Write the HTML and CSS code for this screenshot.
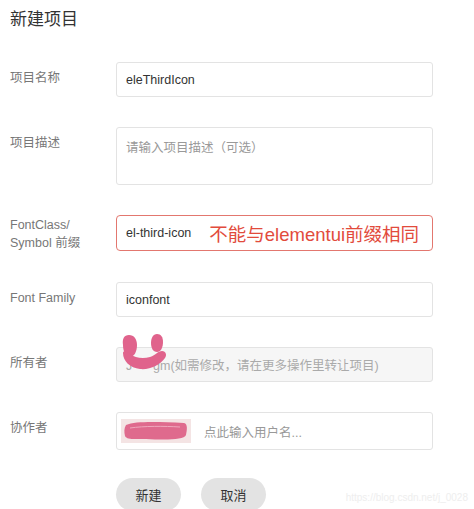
FILE: index.html
```html
<!DOCTYPE html>
<html lang="zh-CN">
<head>
    <meta charset="UTF-8">
    <title>新建项目</title>
    <link rel="stylesheet" href="styles.css">
</head>
<body>
    <h1 class="title">新建项目</h1>

    <form class="project-form">
        <div class="row">
            <label class="label">项目名称</label>
            <div class="field"><input class="input" type="text" value="eleThirdIcon"></div>
        </div>

        <div class="row">
            <label class="label">项目描述</label>
            <div class="field"><textarea class="input textarea" placeholder="请输入项目描述（可选）"></textarea></div>
        </div>

        <div class="row">
            <label class="label label-two">FontClass/<br>Symbol 前缀</label>
            <div class="field">
                <div class="input input-error">
                    <span class="value">el-third-icon</span>
                    <span class="error-note">不能与elementui前缀相同</span>
                </div>
            </div>
        </div>

        <div class="row">
            <label class="label">Font Family</label>
            <div class="field"><input class="input" type="text" value="iconfont"></div>
        </div>

        <div class="row">
            <label class="label">所有者</label>
            <div class="field">
                <div class="input input-disabled">J&nbsp;&nbsp;&nbsp;&nbsp;&nbsp;&nbsp;gm(如需修改，请在更多操作里转让项目)</div>
                <!-- redaction scribble -->
                <svg class="scribble" width="46" height="36" viewBox="0 0 46 36">
                    <path d="M7 1 C2 1 0 5 1 11 C1 18 4 23 8 23 C12 23 15 18 15 11 C15 5 12 1 7 1 Z" fill="#e0638c"/>
                    <path d="M35 0 C31 0 29 4 29 9 C29 14 31 18 35 18 C39 18 41 13 41 8 C41 3 39 0 35 0 Z" fill="#e0638c"/>
                    <path d="M1 19 C1 27 8 34 18 35 C28 36 38 31 43 24 C45 21 44 17 40 17 C36 17 34 21 28 23 C21 25 13 24 8 20 C5 17 1 16 1 19 Z" fill="#e0638c"/>
                </svg>
            </div>
        </div>

        <div class="row">
            <label class="label">协作者</label>
            <div class="field">
                <div class="input input-tags">
                    <span class="tag">
                        <svg width="64" height="20" viewBox="0 0 64 20">
                            <path d="M2 4 C12 0 34 1 60 2 C64 3 63 9 62 14 C60 19 42 19 22 18 C10 18 3 19 1 15 C0 11 0 7 2 4 Z" fill="#df6a8d"/>
                            <path d="M6 7 C20 5 40 5 56 6" stroke="#f0a8bd" stroke-width="1" fill="none"/>
                        </svg>
                    </span>
                    <span class="placeholder">点此输入用户名...</span>
                </div>
            </div>
        </div>

        <div class="actions">
            <button type="button" class="btn">新建</button>
            <button type="button" class="btn">取消</button>
        </div>
    </form>

    <div class="watermark">https://blog.csdn.net/j_0028</div>
</body>
</html>
```

FILE: styles.css
```css
body {
    margin: 0;
    padding: 0 10px;
    font-family: "Liberation Sans", "Noto Sans CJK SC", sans-serif;
    color: #333;
    background: #fff;
    height: 509px;
    overflow: hidden;
    position: relative;
}
.title {
    margin: 0;
    padding-top: 9px;
    font-size: 17px;
    font-weight: normal;
    line-height: 22px;
    color: #333;
}
.project-form {
    margin-top: 31px;
}
.row {
    display: flex;
    margin-bottom: 30px;
}
.label {
    width: 106px;
    flex-shrink: 0;
    font-size: 12.5px;
    color: #777;
    line-height: 33px;
}
.label-two {
    line-height: 18px;
    padding-top: 1px;
}
.field {
    width: 317px;
    position: relative;
}
.input {
    display: block;
    box-sizing: border-box;
    width: 100%;
    height: 35px;
    padding: 0 9px;
    border: 1px solid #e3e3e3;
    border-radius: 3px;
    background: #fff;
    font-family: inherit;
    font-size: 12.5px;
    color: #333;
    outline: none;
}
.textarea {
    height: 58px;
    padding-top: 9px;
    resize: none;
}
.textarea::placeholder {
    color: #999;
}
.input-error {
    display: flex;
    align-items: center;
    height: 36px;
    border-color: #e3776f;
    border-radius: 4px;
}
.error-note {
    margin-left: 18px;
    font-size: 18.5px;
    color: #e24b3c;
}
.input-disabled {
    display: flex;
    align-items: center;
    background: #f6f6f6;
    color: #aaa;
}
.scribble {
    position: absolute;
    left: 6px;
    top: -13px;
}
.input-tags {
    display: flex;
    align-items: center;
    height: 38px;
    padding-left: 4px;
}
.tag {
    display: flex;
    align-items: center;
    justify-content: center;
    width: 70px;
    height: 24px;
    background: #f4e4e4;
}
.placeholder {
    margin-left: 13px;
    color: #999;
}
.actions {
    display: flex;
    gap: 20px;
    padding-left: 106px;
    margin-top: -2px;
}
.btn {
    width: 65px;
    height: 33px;
    border: none;
    border-radius: 17px;
    background: #e3e3e3;
    font-family: inherit;
    font-size: 13px;
    color: #333;
}
.watermark {
    position: absolute;
    right: 6px;
    bottom: 6px;
    font-size: 10px;
    color: #eee;
}
```
